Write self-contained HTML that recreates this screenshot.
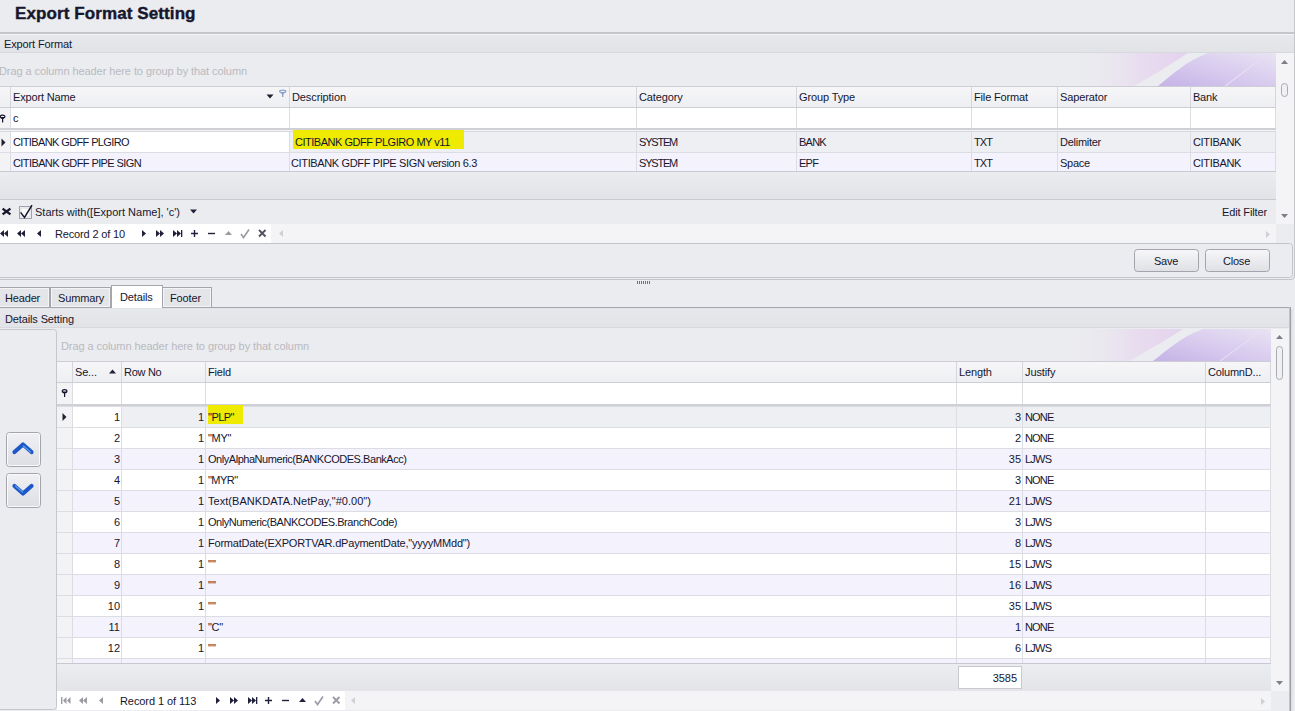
<!DOCTYPE html>
<html><head><meta charset="utf-8"><style>
html,body{margin:0;padding:0;}
body{width:1295px;height:711px;overflow:hidden;position:relative;background:#ebecef;font:11px "Liberation Sans",sans-serif;color:#16162e;}
.r{position:absolute;}
.t{position:absolute;white-space:nowrap;line-height:13px;}
svg.r{overflow:visible;}
</style></head><body>
<div class="r" style="left:0px;top:32px;width:1294px;height:2px;background:#c5c6cb;"></div>
<div class="r" style="left:1294px;top:0px;width:1px;height:278px;background:#c5c6cb;"></div>
<div class="r" style="left:0px;top:34px;width:1294px;height:1px;background:#f4f4f6;"></div>
<div class="r" style="left:0px;top:35px;width:1294px;height:17px;background:linear-gradient(#e7e8eb,#e2e3e7);"></div>
<div class="r" style="left:0px;top:52px;width:1294px;height:1px;background:#d8d9de;"></div>
<div class="r" style="left:0px;top:53px;width:1276px;height:33px;background:#ebecef;"></div>
<svg class="r" style="left:1070px;top:53px" width="206" height="33" viewBox="0 0 206 33"><defs><linearGradient id="pg1" x1="0" x2="1"><stop offset="0" stop-color="#ebecef" stop-opacity="0"/><stop offset="0.6" stop-color="#e8dcef"/><stop offset="1" stop-color="#e4d2ee"/></linearGradient><linearGradient id="pg2" x1="0" y1="1" x2="1" y2="0"><stop offset="0" stop-color="#c4b2e6"/><stop offset="0.45" stop-color="#d6c9ee"/><stop offset="1" stop-color="#e9e3f3"/></linearGradient></defs><path d="M0 0 L118 0 C100 12 80 24 64 33 L0 33Z" fill="url(#pg1)"/><path d="M88 33 C102 22 116 8 138 0 L206 0 L206 33Z" fill="url(#pg2)"/><path d="M155 33 C170 22 185 10 199 0" fill="none" stroke="#e6def2" stroke-width="1.2"/></svg>
<div class="r" style="left:0px;top:86px;width:1276px;height:1px;background:#cdced4;"></div>
<div class="r" style="left:0px;top:87px;width:1276px;height:20px;background:linear-gradient(#f6f6f8,#eeeff2);"></div>
<div class="r" style="left:0px;top:107px;width:1276px;height:1px;background:#cdced4;"></div>
<div class="r" style="left:10px;top:87px;width:1px;height:20px;background:#d5d6db;"></div>
<div class="r" style="left:289px;top:87px;width:1px;height:20px;background:#d5d6db;"></div>
<div class="r" style="left:636px;top:87px;width:1px;height:20px;background:#d5d6db;"></div>
<div class="r" style="left:796px;top:87px;width:1px;height:20px;background:#d5d6db;"></div>
<div class="r" style="left:971px;top:87px;width:1px;height:20px;background:#d5d6db;"></div>
<div class="r" style="left:1057px;top:87px;width:1px;height:20px;background:#d5d6db;"></div>
<div class="r" style="left:1190px;top:87px;width:1px;height:20px;background:#d5d6db;"></div>
<div class="r" style="left:1275px;top:87px;width:1px;height:20px;background:#d5d6db;"></div>
<svg class="r" style="left:0;top:0" width="1295" height="120"><path d="M266.5 94.5 L273.5 94.5 L270 98.5Z" fill="#202030"/><ellipse cx="282.7" cy="91.3" rx="3.2" ry="1.2" fill="none" stroke="#8fa0cc" stroke-width="1.1"/><path d="M279.5 92 L286 92 L283.4 94.3 L283.4 97 L282 97 L282 94.3Z" fill="#8fa0cc"/></svg>
<div class="r" style="left:11px;top:108px;width:1265px;height:20px;background:#ffffff;"></div>
<div class="r" style="left:0px;top:108px;width:10px;height:20px;background:#f3f3f6;"></div>
<div class="r" style="left:10px;top:108px;width:1px;height:21px;background:#dcdde1;"></div>
<div class="r" style="left:289px;top:108px;width:1px;height:21px;background:#dcdde1;"></div>
<div class="r" style="left:636px;top:108px;width:1px;height:21px;background:#dcdde1;"></div>
<div class="r" style="left:796px;top:108px;width:1px;height:21px;background:#dcdde1;"></div>
<div class="r" style="left:971px;top:108px;width:1px;height:21px;background:#dcdde1;"></div>
<div class="r" style="left:1057px;top:108px;width:1px;height:21px;background:#dcdde1;"></div>
<div class="r" style="left:1190px;top:108px;width:1px;height:21px;background:#dcdde1;"></div>
<div class="r" style="left:1275px;top:108px;width:1px;height:21px;background:#dcdde1;"></div>
<div class="r" style="left:0px;top:128px;width:1276px;height:2px;background:#cfd0d5;"></div>
<div class="r" style="left:0px;top:130px;width:1276px;height:1px;background:#f4f4f6;"></div>
<div class="r" style="left:0px;top:131px;width:1276px;height:1px;background:#d6d7dc;"></div>
<svg class="r" style="left:0px;top:114px" width="8" height="10"><ellipse cx="2.6" cy="2.6" rx="2.3" ry="1.5" fill="none" stroke="#16162e" stroke-width="1.2"/><path d="M0.3 3 L5 3 L3.2 5 L3.2 8.5 L2 8.5 L2 5Z" fill="#16162e"/></svg>
<div class="r" style="left:0px;top:132px;width:10px;height:20px;background:#f3f3f6;"></div>
<div class="r" style="left:11px;top:132px;width:1265px;height:20px;background:#eeeff2;"></div>
<div class="r" style="left:11px;top:132px;width:278px;height:20px;background:#ffffff;"></div>
<div class="r" style="left:293px;top:130px;width:171px;height:19px;background:#eeea00;"></div>
<div class="r" style="left:0px;top:152px;width:1276px;height:1px;background:#dcdde2;"></div>
<div class="r" style="left:0px;top:153px;width:10px;height:18px;background:#f3f3f6;"></div>
<div class="r" style="left:11px;top:153px;width:1265px;height:18px;background:#f4f2fc;"></div>
<div class="r" style="left:0px;top:171px;width:1276px;height:1px;background:#c9cad1;"></div>
<div class="r" style="left:10px;top:132px;width:1px;height:39px;background:#dcdde2;"></div>
<div class="r" style="left:289px;top:132px;width:1px;height:39px;background:#dcdde2;"></div>
<div class="r" style="left:636px;top:132px;width:1px;height:39px;background:#dcdde2;"></div>
<div class="r" style="left:796px;top:132px;width:1px;height:39px;background:#dcdde2;"></div>
<div class="r" style="left:971px;top:132px;width:1px;height:39px;background:#dcdde2;"></div>
<div class="r" style="left:1057px;top:132px;width:1px;height:39px;background:#dcdde2;"></div>
<div class="r" style="left:1190px;top:132px;width:1px;height:39px;background:#dcdde2;"></div>
<div class="r" style="left:1275px;top:132px;width:1px;height:39px;background:#dcdde2;"></div>
<svg class="r" style="left:1px;top:138px" width="6" height="9"><path d="M0.5 0.5 L4.5 4.5 L0.5 8.5Z" fill="#202030"/></svg>
<div class="r" style="left:0px;top:172px;width:1276px;height:27px;background:linear-gradient(#ebecef,#e2e3e7);"></div>
<div class="r" style="left:0px;top:199px;width:1276px;height:1px;background:#c9cad1;"></div>
<div class="r" style="left:0px;top:200px;width:1276px;height:24px;background:#ebecef;"></div>
<svg class="r" style="left:0px;top:206px" width="14" height="11"><path d="M2.6 2.6 L10.4 8.4 M10.4 2.6 L2.6 8.4" stroke="#16162e" stroke-width="2.3"/></svg>
<svg class="r" style="left:19px;top:204px" width="16" height="17"><rect x="0.5" y="2.5" width="12" height="12" fill="#fafafb" stroke="#a0a1a9"/><rect x="2" y="4" width="9" height="9" fill="none" stroke="#d9dadf"/><path d="M1.6 8.4 L5.5 13.4 L13 1.2" fill="none" stroke="#16162e" stroke-width="1.5"/></svg>
<svg class="r" style="left:190px;top:209px" width="8" height="6"><path d="M0 0.5 L7 0.5 L3.5 4.5Z" fill="#20203a"/></svg>
<div class="r" style="left:0px;top:224px;width:1276px;height:20px;background:#f4f4f6;"></div>
<div class="r" style="left:0px;top:224px;width:271px;height:20px;background:#ffffff;"></div>
<div class="r" style="left:0px;top:243px;width:1276px;height:1px;background:#c9cad0;"></div>
<div class="r" style="left:1276px;top:53px;width:18px;height:171px;background:#f4f4f6;"></div>
<div class="r" style="left:1276px;top:224px;width:18px;height:20px;background:#ebecef;"></div>
<div class="r" style="left:0px;top:307px;width:1291px;height:1px;background:#a4a5ad;"></div>
<div class="r" style="left:0px;top:308px;width:1291px;height:1px;background:#e2e3e7;"></div>
<div class="r" style="left:1289px;top:307px;width:1px;height:404px;background:#c2c3c9;"></div>
<div class="r" style="left:1290px;top:307px;width:1px;height:404px;background:#9d9ea6;"></div>
<div class="r" style="left:1291px;top:309px;width:3px;height:402px;background:linear-gradient(90deg,#dcdde1,#ebecef);"></div>
<div class="r" style="left:0px;top:309px;width:1289px;height:18px;background:linear-gradient(#e7e8eb,#e2e3e7);"></div>
<div class="r" style="left:0px;top:327px;width:1289px;height:1px;background:#d8d9de;"></div>
<div class="r" style="left:0px;top:710px;width:1289px;height:1px;background:#ebecef;"></div>
<div class="r" style="left:57px;top:329px;width:1214px;height:32px;background:#ebecef;"></div>
<svg class="r" style="left:1065px;top:329px" width="206" height="32" viewBox="0 0 206 33" preserveAspectRatio="none"><defs><linearGradient id="pg3" x1="0" x2="1"><stop offset="0" stop-color="#ebecef" stop-opacity="0"/><stop offset="0.6" stop-color="#e8dcef"/><stop offset="1" stop-color="#e4d2ee"/></linearGradient><linearGradient id="pg4" x1="0" y1="1" x2="1" y2="0"><stop offset="0" stop-color="#c4b2e6"/><stop offset="0.45" stop-color="#d6c9ee"/><stop offset="1" stop-color="#e9e3f3"/></linearGradient></defs><path d="M0 0 L118 0 C100 12 80 24 64 33 L0 33Z" fill="url(#pg3)"/><path d="M88 33 C102 22 116 8 138 0 L206 0 L206 33Z" fill="url(#pg4)"/><path d="M155 33 C170 22 185 10 199 0" fill="none" stroke="#e6def2" stroke-width="1.2"/></svg>
<div class="r" style="left:57px;top:361px;width:1214px;height:1px;background:#cdced4;"></div>
<div class="r" style="left:57px;top:362px;width:1214px;height:20px;background:linear-gradient(#f6f6f8,#eeeff2);"></div>
<div class="r" style="left:57px;top:382px;width:1214px;height:1px;background:#cdced4;"></div>
<div class="r" style="left:72px;top:362px;width:1px;height:20px;background:#d5d6db;"></div>
<div class="r" style="left:121px;top:362px;width:1px;height:20px;background:#d5d6db;"></div>
<div class="r" style="left:205px;top:362px;width:1px;height:20px;background:#d5d6db;"></div>
<div class="r" style="left:956px;top:362px;width:1px;height:20px;background:#d5d6db;"></div>
<div class="r" style="left:1022px;top:362px;width:1px;height:20px;background:#d5d6db;"></div>
<div class="r" style="left:1205px;top:362px;width:1px;height:20px;background:#d5d6db;"></div>
<div class="r" style="left:1270px;top:362px;width:1px;height:20px;background:#d5d6db;"></div>
<div class="r" style="left:73px;top:383px;width:1198px;height:21px;background:#ffffff;"></div>
<div class="r" style="left:57px;top:383px;width:15px;height:21px;background:#f3f3f6;"></div>
<div class="r" style="left:72px;top:383px;width:1px;height:21px;background:#dcdde1;"></div>
<div class="r" style="left:121px;top:383px;width:1px;height:21px;background:#dcdde1;"></div>
<div class="r" style="left:205px;top:383px;width:1px;height:21px;background:#dcdde1;"></div>
<div class="r" style="left:956px;top:383px;width:1px;height:21px;background:#dcdde1;"></div>
<div class="r" style="left:1022px;top:383px;width:1px;height:21px;background:#dcdde1;"></div>
<div class="r" style="left:1205px;top:383px;width:1px;height:21px;background:#dcdde1;"></div>
<div class="r" style="left:1270px;top:383px;width:1px;height:21px;background:#dcdde1;"></div>
<div class="r" style="left:57px;top:404px;width:1214px;height:2px;background:#cfd0d5;"></div>
<div class="r" style="left:57px;top:406px;width:1214px;height:1px;background:#dcdde2;"></div>
<div class="r" style="left:57px;top:407px;width:15px;height:20px;background:#f3f3f6;"></div>
<div class="r" style="left:73px;top:407px;width:1198px;height:20px;background:#eeeff2;"></div>
<div class="r" style="left:73px;top:407px;width:48px;height:20px;background:#ffffff;"></div>
<div class="r" style="left:208px;top:405px;width:35px;height:19px;background:#eeea00;"></div>
<div class="r" style="left:57px;top:427px;width:1214px;height:1px;background:#dcdde2;"></div>
<div class="r" style="left:57px;top:428px;width:15px;height:20px;background:#f3f3f6;"></div>
<div class="r" style="left:73px;top:428px;width:1198px;height:20px;background:#ffffff;"></div>
<div class="r" style="left:57px;top:448px;width:1214px;height:1px;background:#dcdde2;"></div>
<div class="r" style="left:57px;top:449px;width:15px;height:20px;background:#f3f3f6;"></div>
<div class="r" style="left:73px;top:449px;width:1198px;height:20px;background:#f4f2fc;"></div>
<div class="r" style="left:57px;top:469px;width:1214px;height:1px;background:#dcdde2;"></div>
<div class="r" style="left:57px;top:470px;width:15px;height:20px;background:#f3f3f6;"></div>
<div class="r" style="left:73px;top:470px;width:1198px;height:20px;background:#ffffff;"></div>
<div class="r" style="left:57px;top:490px;width:1214px;height:1px;background:#dcdde2;"></div>
<div class="r" style="left:57px;top:491px;width:15px;height:20px;background:#f3f3f6;"></div>
<div class="r" style="left:73px;top:491px;width:1198px;height:20px;background:#f4f2fc;"></div>
<div class="r" style="left:57px;top:511px;width:1214px;height:1px;background:#dcdde2;"></div>
<div class="r" style="left:57px;top:512px;width:15px;height:20px;background:#f3f3f6;"></div>
<div class="r" style="left:73px;top:512px;width:1198px;height:20px;background:#ffffff;"></div>
<div class="r" style="left:57px;top:532px;width:1214px;height:1px;background:#dcdde2;"></div>
<div class="r" style="left:57px;top:533px;width:15px;height:20px;background:#f3f3f6;"></div>
<div class="r" style="left:73px;top:533px;width:1198px;height:20px;background:#f4f2fc;"></div>
<div class="r" style="left:57px;top:553px;width:1214px;height:1px;background:#dcdde2;"></div>
<div class="r" style="left:57px;top:554px;width:15px;height:20px;background:#f3f3f6;"></div>
<div class="r" style="left:73px;top:554px;width:1198px;height:20px;background:#ffffff;"></div>
<div class="r" style="left:57px;top:574px;width:1214px;height:1px;background:#dcdde2;"></div>
<div class="r" style="left:57px;top:575px;width:15px;height:20px;background:#f3f3f6;"></div>
<div class="r" style="left:73px;top:575px;width:1198px;height:20px;background:#f4f2fc;"></div>
<div class="r" style="left:57px;top:595px;width:1214px;height:1px;background:#dcdde2;"></div>
<div class="r" style="left:57px;top:596px;width:15px;height:20px;background:#f3f3f6;"></div>
<div class="r" style="left:73px;top:596px;width:1198px;height:20px;background:#ffffff;"></div>
<div class="r" style="left:57px;top:616px;width:1214px;height:1px;background:#dcdde2;"></div>
<div class="r" style="left:57px;top:617px;width:15px;height:20px;background:#f3f3f6;"></div>
<div class="r" style="left:73px;top:617px;width:1198px;height:20px;background:#f4f2fc;"></div>
<div class="r" style="left:57px;top:637px;width:1214px;height:1px;background:#dcdde2;"></div>
<div class="r" style="left:57px;top:638px;width:15px;height:20px;background:#f3f3f6;"></div>
<div class="r" style="left:73px;top:638px;width:1198px;height:20px;background:#ffffff;"></div>
<div class="r" style="left:57px;top:658px;width:1214px;height:1px;background:#dcdde2;"></div>
<div class="r" style="left:57px;top:659px;width:15px;height:4px;background:#f3f3f6;"></div>
<div class="r" style="left:73px;top:659px;width:1198px;height:4px;background:#f4f2fc;"></div>
<div class="r" style="left:72px;top:407px;width:1px;height:256px;background:#dcdde2;"></div>
<div class="r" style="left:121px;top:407px;width:1px;height:256px;background:#dcdde2;"></div>
<div class="r" style="left:205px;top:407px;width:1px;height:256px;background:#dcdde2;"></div>
<div class="r" style="left:956px;top:407px;width:1px;height:256px;background:#dcdde2;"></div>
<div class="r" style="left:1022px;top:407px;width:1px;height:256px;background:#dcdde2;"></div>
<div class="r" style="left:1205px;top:407px;width:1px;height:256px;background:#dcdde2;"></div>
<div class="r" style="left:1270px;top:407px;width:1px;height:256px;background:#dcdde2;"></div>
<div class="r" style="left:57px;top:663px;width:1214px;height:1px;background:#c8c9d0;"></div>
<div class="r" style="left:57px;top:664px;width:1214px;height:27px;background:linear-gradient(#ecedf0,#e3e4e8);"></div>
<div class="r" style="left:57px;top:691px;width:1214px;height:19px;background:#f4f4f6;"></div>
<div class="r" style="left:57px;top:691px;width:288px;height:19px;background:#ffffff;"></div>
<div class="r" style="left:1271px;top:329px;width:18px;height:362px;background:#f4f4f6;"></div>
<div class="r" style="left:1271px;top:691px;width:18px;height:19px;background:#ebecef;"></div>
<svg class="r" style="left:0;top:0" width="1295" height="711"><path d="M4 230 l-4 3.5 l4 3.5Z M8 230 l-4 3.5 l4 3.5Z" fill="#20203a"/><path d="M21 230 l-4 3.5 l4 3.5Z M25 230 l-4 3.5 l4 3.5Z" fill="#20203a"/><path d="M41 230 l-4 3.5 l4 3.5Z" fill="#20203a"/><path d="M142 230 l4 3.5 l-4 3.5Z" fill="#20203a"/><path d="M156 230 l4 3.5 l-4 3.5Z M160 230 l4 3.5 l-4 3.5Z" fill="#20203a"/><path d="M173 230 l4 3.5 l-4 3.5Z M177 230 l4 3.5 l-4 3.5Z" fill="#20203a"/><rect x="181" y="230" width="1.3" height="7" fill="#20203a"/><path d="M191 233.5 h7 M194.5 230 v7" stroke="#20203a" stroke-width="1.4"/><path d="M208 233.5 h7" stroke="#20203a" stroke-width="1.4"/><path d="M225 235 l3.5 -4 l3.5 4Z" fill="#9a9ba3"/><path d="M241 234 l2.5 3.5 l5.5 -8" fill="none" stroke="#9a9ba3" stroke-width="1.6"/><path d="M259 230 l6.5 6.5 M265.5 230 l-6.5 6.5" stroke="#50505e" stroke-width="1.8"/><path d="M283 230 l-4 3.5 l4 3.5Z" fill="#cfd0d6"/><path d="M1266 231 l4 3.5 l-4 3.5Z" fill="#cfd0d6"/><path d="M1281 64 l3.5 -4 l3.5 4Z" fill="#7d7e88"/><rect x="1281.5" y="83.5" width="6" height="13" rx="3" fill="#f0f0f3" stroke="#a9aab2"/><path d="M1281 214 l3.5 4 l3.5 -4Z" fill="#7d7e88"/><rect x="-3.5" y="243.5" width="1296" height="34" rx="3" fill="#ebecef" stroke="#c3c4ca"/><path d="M0 279.5 H1291 Q1294.5 279.5 1294.5 276 V270" fill="none" stroke="#c3c4ca"/><defs><linearGradient id="bg1134" x1="0" x2="0" y1="0" y2="1"><stop offset="0" stop-color="#f7f7f9"/><stop offset="1" stop-color="#dfe0e5"/></linearGradient></defs><rect x="1134.5" y="249.5" width="64" height="22" rx="3" fill="url(#bg1134)" stroke="#a3a4ac"/><defs><linearGradient id="bg1205" x1="0" x2="0" y1="0" y2="1"><stop offset="0" stop-color="#f7f7f9"/><stop offset="1" stop-color="#dfe0e5"/></linearGradient></defs><rect x="1205.5" y="249.5" width="64" height="22" rx="3" fill="url(#bg1205)" stroke="#a3a4ac"/><rect x="637" y="281" width="1" height="3" fill="#70717c"/><rect x="639" y="281" width="1" height="3" fill="#70717c"/><rect x="641" y="281" width="1" height="3" fill="#70717c"/><rect x="643" y="281" width="1" height="3" fill="#70717c"/><rect x="645" y="281" width="1" height="3" fill="#70717c"/><rect x="647" y="281" width="1" height="3" fill="#70717c"/><rect x="649" y="281" width="1" height="3" fill="#70717c"/><rect x="-3.5" y="287.5" width="53" height="20" fill="#e4e5e9" stroke="#a4a5ad"/><rect x="-2.5" y="288.5" width="51" height="18" fill="none" stroke="#f4f4f7"/><rect x="50.5" y="287.5" width="60" height="20" fill="#e4e5e9" stroke="#a4a5ad"/><rect x="51.5" y="288.5" width="58" height="18" fill="none" stroke="#f4f4f7"/><rect x="162.5" y="287.5" width="49" height="20" fill="#e4e5e9" stroke="#a4a5ad"/><rect x="163.5" y="288.5" width="47" height="18" fill="none" stroke="#f4f4f7"/><rect x="111.5" y="285.5" width="51" height="22" fill="#ffffff" stroke="#a4a5ad"/><rect x="112" y="306" width="50" height="2" fill="#ffffff"/><rect x="-4.5" y="329.5" width="61" height="380" rx="3" fill="#ebecef" stroke="#c6c7cc"/><defs><linearGradient id="ub432" x1="0" x2="0" y1="0" y2="1"><stop offset="0" stop-color="#f1f1f4"/><stop offset="1" stop-color="#dddee3"/></linearGradient></defs><rect x="6.5" y="432.5" width="34" height="34" rx="3" fill="url(#ub432)" stroke="#a3a4ac"/><rect x="7.5" y="433.5" width="32" height="32" rx="2" fill="none" stroke="#fafafc" stroke-width="1"/><path d="M14.5 452 L23 444.5 L31.5 452" fill="none" stroke="#1c58c8" stroke-width="4.2" stroke-linecap="round" stroke-linejoin="round"/><path d="M23.5 446 L30.5 452" fill="none" stroke="#5a9ae8" stroke-width="1.3" stroke-linecap="round"/><defs><linearGradient id="ub473" x1="0" x2="0" y1="0" y2="1"><stop offset="0" stop-color="#f1f1f4"/><stop offset="1" stop-color="#dddee3"/></linearGradient></defs><rect x="6.5" y="473.5" width="34" height="34" rx="3" fill="url(#ub473)" stroke="#a3a4ac"/><rect x="7.5" y="474.5" width="32" height="32" rx="2" fill="none" stroke="#fafafc" stroke-width="1"/><path d="M14.5 486 L23 493.5 L31.5 486" fill="none" stroke="#1c58c8" stroke-width="4.2" stroke-linecap="round" stroke-linejoin="round"/><path d="M15.5 486 L22.5 492" fill="none" stroke="#5a9ae8" stroke-width="1.3" stroke-linecap="round"/><path d="M109 373.5 l3.5 -4 l3.5 4Z" fill="#20203a"/><ellipse cx="64.6" cy="391.2" rx="2.3" ry="1.5" fill="none" stroke="#16162e" stroke-width="1.2"/><path d="M62.3 391.6 L67 391.6 L65.2 393.6 L65.2 397 L64 397 L64 393.6Z" fill="#16162e"/><path d="M62.5 413 l4 4 l-4 4Z" fill="#202030"/><rect x="958.5" y="666.5" width="63" height="22" fill="#ffffff" stroke="#c9cacf"/><rect x="61" y="697" width="1.4" height="7" fill="#9a9ba3"/><path d="M66.5 697 l-3.5 3.5 l3.5 3.5Z M70.5 697 l-3.5 3.5 l3.5 3.5Z" fill="#9a9ba3"/><path d="M83 697 l-4 3.5 l4 3.5Z M87 697 l-4 3.5 l4 3.5Z" fill="#9a9ba3"/><path d="M103 697 l-4 3.5 l4 3.5Z" fill="#9a9ba3"/><path d="M216 697 l4 3.5 l-4 3.5Z" fill="#20203a"/><path d="M230 697 l4 3.5 l-4 3.5Z M234 697 l4 3.5 l-4 3.5Z" fill="#20203a"/><path d="M248 697 l4 3.5 l-4 3.5Z M252 697 l4 3.5 l-4 3.5Z" fill="#20203a"/><rect x="256" y="697" width="1.3" height="7" fill="#20203a"/><path d="M265 700.5 h7 M268.5 697 v7" stroke="#20203a" stroke-width="1.4"/><path d="M282 700.5 h7" stroke="#20203a" stroke-width="1.4"/><path d="M299 702 l3.5 -4 l3.5 4Z" fill="#20203a"/><path d="M315 701 l2.5 3.5 l5.5 -8" fill="none" stroke="#9a9ba3" stroke-width="1.6"/><path d="M333 697 l6.5 6.5 M339.5 697 l-6.5 6.5" stroke="#9a9ba3" stroke-width="1.8"/><path d="M355 697 l-4 3.5 l4 3.5Z" fill="#cfd0d6"/><path d="M1276 339 l3.5 -4 l3.5 4Z" fill="#7d7e88"/><rect x="1276.5" y="346.5" width="6" height="33" rx="3" fill="#f0f0f3" stroke="#a9aab2"/><path d="M1276 681 l3.5 4 l3.5 -4Z" fill="#7d7e88"/><path d="M1261 698 l4 3.5 l-4 3.5Z" fill="#cfd0d6"/></svg>
<div class="t" style="top:5px;letter-spacing:-0.129px;left:15px;font:bold 17px 'Liberation Sans';line-height:20px;top:4px;letter-spacing:0.1px;-webkit-text-stroke:0.4px #16162e;">Export Format Setting</div>
<div class="t" style="top:38px;letter-spacing:-0.137px;left:4px;">Export Format</div>
<div class="t" style="top:65px;letter-spacing:-0.080px;color:#b9bac1;left:-1px;">Drag a column header here to group by that column</div>
<div class="t" style="top:91px;letter-spacing:-0.169px;left:13px;">Export Name</div>
<div class="t" style="top:91px;letter-spacing:-0.100px;left:292px;">Description</div>
<div class="t" style="top:91px;letter-spacing:-0.129px;left:639px;">Category</div>
<div class="t" style="top:91px;letter-spacing:-0.122px;left:799px;">Group Type</div>
<div class="t" style="top:91px;letter-spacing:-0.149px;left:974px;">File Format</div>
<div class="t" style="top:91px;letter-spacing:-0.111px;left:1060px;">Saperator</div>
<div class="t" style="top:91px;letter-spacing:-0.215px;left:1193px;">Bank</div>
<div class="t" style="top:112px;letter-spacing:-0.032px;left:13px;">c</div>
<div class="t" style="top:136px;letter-spacing:-0.617px;left:13px;">CITIBANK GDFF PLGIRO</div>
<div class="t" style="top:136px;letter-spacing:-0.477px;left:295px;">CITIBANK GDFF PLGIRO MY v11</div>
<div class="t" style="top:136px;letter-spacing:-1.205px;left:639px;">SYSTEM</div>
<div class="t" style="top:136px;letter-spacing:-0.772px;left:799px;">BANK</div>
<div class="t" style="top:136px;letter-spacing:-0.925px;left:974px;">TXT</div>
<div class="t" style="top:136px;letter-spacing:-0.266px;left:1060px;">Delimiter</div>
<div class="t" style="top:136px;letter-spacing:-0.341px;left:1193px;">CITIBANK</div>
<div class="t" style="top:157px;letter-spacing:-0.597px;left:13px;">CITIBANK GDFF PIPE SIGN</div>
<div class="t" style="top:157px;letter-spacing:-0.362px;left:291px;">CITIBANK GDFF PIPE SIGN version 6.3</div>
<div class="t" style="top:157px;letter-spacing:-1.205px;left:639px;">SYSTEM</div>
<div class="t" style="top:157px;letter-spacing:-0.735px;left:799px;">EPF</div>
<div class="t" style="top:157px;letter-spacing:-0.925px;left:974px;">TXT</div>
<div class="t" style="top:157px;letter-spacing:-0.238px;left:1060px;">Space</div>
<div class="t" style="top:157px;letter-spacing:-0.341px;left:1193px;">CITIBANK</div>
<div class="t" style="top:206px;letter-spacing:0.007px;left:35px;">Starts with([Export Name], 'c')</div>
<div class="t" style="top:206px;letter-spacing:-0.132px;left:1222px;">Edit Filter</div>
<div class="t" style="top:228px;letter-spacing:-0.154px;left:55px;">Record 2 of 10</div>
<div class="t" style="top:255px;letter-spacing:-0.215px;left:1153.8944043945312px;">Save</div>
<div class="t" style="top:255px;letter-spacing:-0.188px;left:1222.907510546875px;">Close</div>
<div class="t" style="top:292px;letter-spacing:-0.164px;left:5px;">Header</div>
<div class="t" style="top:292px;letter-spacing:-0.142px;left:58px;">Summary</div>
<div class="t" style="top:292px;letter-spacing:-0.140px;left:170px;">Footer</div>
<div class="t" style="top:291px;letter-spacing:-0.139px;left:120px;">Details</div>
<div class="t" style="top:313px;letter-spacing:-0.127px;left:5px;">Details Setting</div>
<div class="t" style="top:340px;letter-spacing:-0.080px;color:#b9bac1;left:61px;">Drag a column header here to group by that column</div>
<div class="t" style="top:366px;letter-spacing:-0.169px;left:75px;">Se...</div>
<div class="t" style="top:366px;letter-spacing:-0.296px;left:124px;">Row No</div>
<div class="t" style="top:366px;letter-spacing:-0.159px;left:208px;">Field</div>
<div class="t" style="top:366px;letter-spacing:-0.132px;left:959px;">Length</div>
<div class="t" style="top:366px;letter-spacing:-0.103px;left:1025px;">Justify</div>
<div class="t" style="top:366px;letter-spacing:-0.187px;left:1208px;">ColumnD...</div>
<div class="t" style="top:411px;letter-spacing:-0.036px;left:113.9px;">1</div>
<div class="t" style="top:411px;letter-spacing:-0.036px;left:197.9px;">1</div>
<div class="t" style="top:411px;letter-spacing:-0.520px;left:208px;">"PLP"</div>
<div class="t" style="top:411px;letter-spacing:-0.036px;left:1014.9px;">3</div>
<div class="t" style="top:411px;letter-spacing:-0.819px;left:1025px;">NONE</div>
<div class="t" style="top:432px;letter-spacing:-0.036px;left:113.9px;">2</div>
<div class="t" style="top:432px;letter-spacing:-0.036px;left:197.9px;">1</div>
<div class="t" style="top:432px;letter-spacing:-0.327px;left:208px;">"MY"</div>
<div class="t" style="top:432px;letter-spacing:-0.036px;left:1014.9px;">2</div>
<div class="t" style="top:432px;letter-spacing:-0.819px;left:1025px;">NONE</div>
<div class="t" style="top:453px;letter-spacing:-0.036px;left:113.9px;">3</div>
<div class="t" style="top:453px;letter-spacing:-0.036px;left:197.9px;">1</div>
<div class="t" style="top:453px;letter-spacing:-0.459px;left:208px;">OnlyAlphaNumeric(BANKCODES.BankAcc)</div>
<div class="t" style="top:453px;letter-spacing:-0.036px;left:1008.8px;">35</div>
<div class="t" style="top:453px;letter-spacing:-0.756px;left:1025px;">LJWS</div>
<div class="t" style="top:474px;letter-spacing:-0.036px;left:113.9px;">4</div>
<div class="t" style="top:474px;letter-spacing:-0.036px;left:197.9px;">1</div>
<div class="t" style="top:474px;letter-spacing:-0.551px;left:208px;">"MYR"</div>
<div class="t" style="top:474px;letter-spacing:-0.036px;left:1014.9px;">3</div>
<div class="t" style="top:474px;letter-spacing:-0.819px;left:1025px;">NONE</div>
<div class="t" style="top:495px;letter-spacing:-0.036px;left:113.9px;">5</div>
<div class="t" style="top:495px;letter-spacing:-0.036px;left:197.9px;">1</div>
<div class="t" style="top:495px;letter-spacing:0.039px;left:208px;">Text(BANKDATA.NetPay,"#0.00")</div>
<div class="t" style="top:495px;letter-spacing:-0.036px;left:1008.8px;">21</div>
<div class="t" style="top:495px;letter-spacing:-0.756px;left:1025px;">LJWS</div>
<div class="t" style="top:516px;letter-spacing:-0.036px;left:113.9px;">6</div>
<div class="t" style="top:516px;letter-spacing:-0.036px;left:197.9px;">1</div>
<div class="t" style="top:516px;letter-spacing:-0.460px;left:208px;">OnlyNumeric(BANKCODES.BranchCode)</div>
<div class="t" style="top:516px;letter-spacing:-0.036px;left:1014.9px;">3</div>
<div class="t" style="top:516px;letter-spacing:-0.756px;left:1025px;">LJWS</div>
<div class="t" style="top:537px;letter-spacing:-0.036px;left:113.9px;">7</div>
<div class="t" style="top:537px;letter-spacing:-0.036px;left:197.9px;">1</div>
<div class="t" style="top:537px;letter-spacing:-0.211px;left:208px;">FormatDate(EXPORTVAR.dPaymentDate,"yyyyMMdd")</div>
<div class="t" style="top:537px;letter-spacing:-0.036px;left:1014.9px;">8</div>
<div class="t" style="top:537px;letter-spacing:-0.756px;left:1025px;">LJWS</div>
<div class="t" style="top:558px;letter-spacing:-0.036px;left:113.9px;">8</div>
<div class="t" style="top:558px;letter-spacing:-0.036px;left:197.9px;">1</div>
<div class="t" style="top:558px;letter-spacing:-0.023px;left:208px;">""</div>
<div class="t" style="top:558px;letter-spacing:-0.036px;left:1008.8px;">15</div>
<div class="t" style="top:558px;letter-spacing:-0.756px;left:1025px;">LJWS</div>
<div class="t" style="top:579px;letter-spacing:-0.036px;left:113.9px;">9</div>
<div class="t" style="top:579px;letter-spacing:-0.036px;left:197.9px;">1</div>
<div class="t" style="top:579px;letter-spacing:-0.023px;left:208px;">""</div>
<div class="t" style="top:579px;letter-spacing:-0.036px;left:1008.8px;">16</div>
<div class="t" style="top:579px;letter-spacing:-0.756px;left:1025px;">LJWS</div>
<div class="t" style="top:600px;letter-spacing:-0.036px;left:107.8px;">10</div>
<div class="t" style="top:600px;letter-spacing:-0.036px;left:197.9px;">1</div>
<div class="t" style="top:600px;letter-spacing:-0.023px;left:208px;">""</div>
<div class="t" style="top:600px;letter-spacing:-0.036px;left:1008.8px;">35</div>
<div class="t" style="top:600px;letter-spacing:-0.756px;left:1025px;">LJWS</div>
<div class="t" style="top:621px;letter-spacing:-0.034px;left:108.6px;">11</div>
<div class="t" style="top:621px;letter-spacing:-0.036px;left:197.9px;">1</div>
<div class="t" style="top:621px;letter-spacing:-0.288px;left:208px;">"C"</div>
<div class="t" style="top:621px;letter-spacing:-0.036px;left:1014.9px;">1</div>
<div class="t" style="top:621px;letter-spacing:-0.819px;left:1025px;">NONE</div>
<div class="t" style="top:642px;letter-spacing:-0.036px;left:107.8px;">12</div>
<div class="t" style="top:642px;letter-spacing:-0.036px;left:197.9px;">1</div>
<div class="t" style="top:642px;letter-spacing:-0.023px;left:208px;">""</div>
<div class="t" style="top:642px;letter-spacing:-0.036px;left:1014.9px;">6</div>
<div class="t" style="top:642px;letter-spacing:-0.756px;left:1025px;">LJWS</div>
<div class="t" style="top:672px;letter-spacing:-0.036px;left:992.7px;">3585</div>
<div class="t" style="top:695px;letter-spacing:-0.082px;left:120px;">Record 1 of 113</div>
</body></html>
